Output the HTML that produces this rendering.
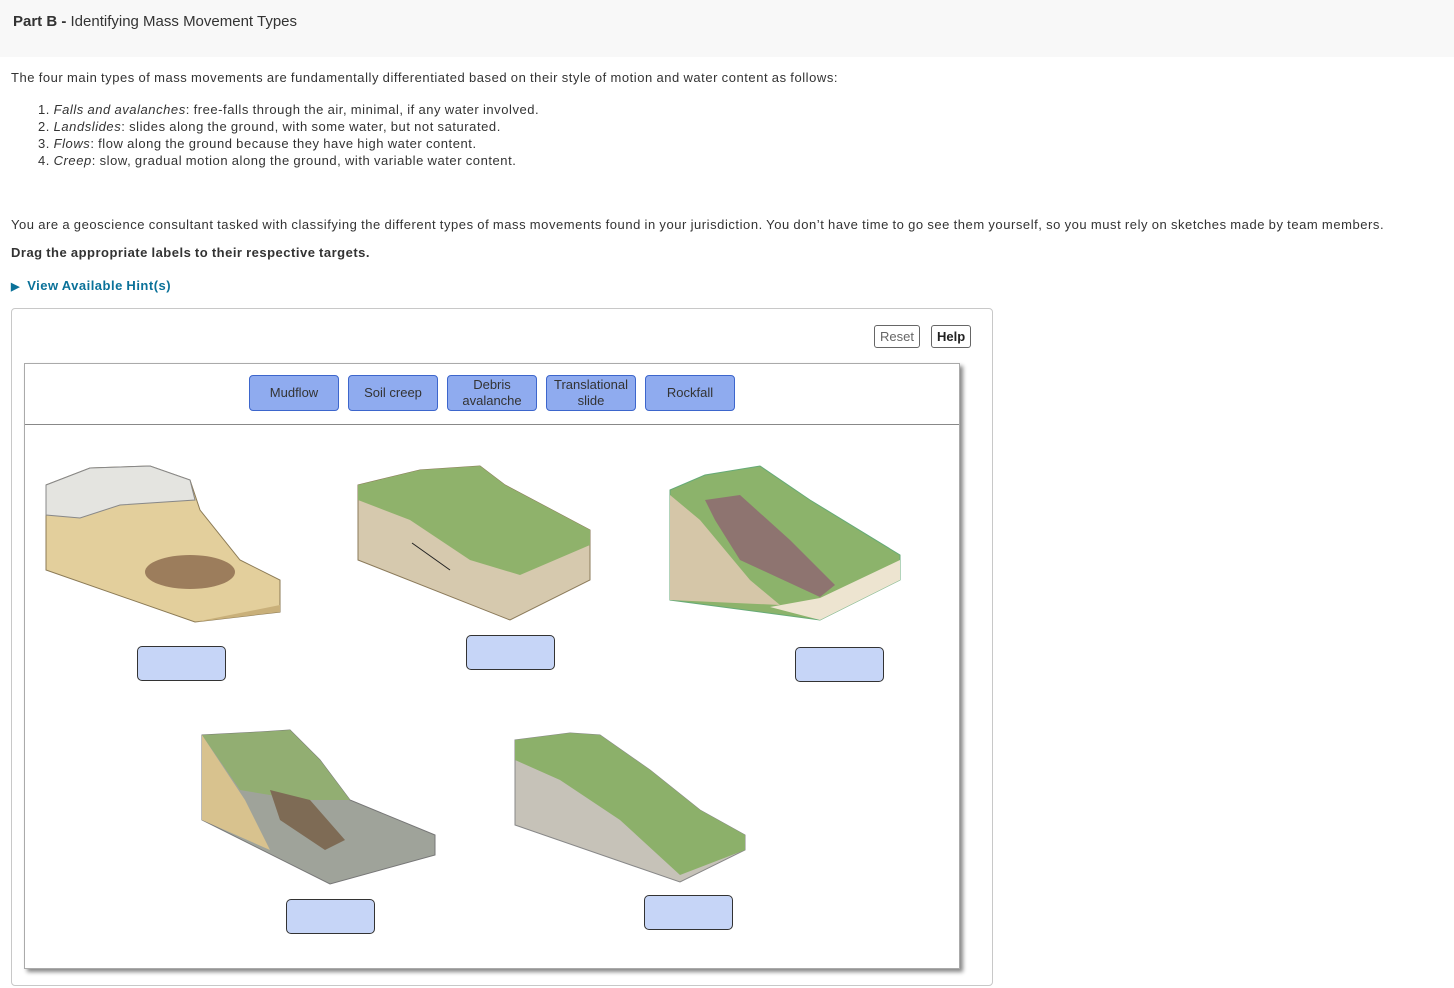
<!DOCTYPE html>
<html><head><meta charset="utf-8"><style>
*{box-sizing:border-box}
body{margin:0;width:1454px;height:988px;background:#fff;font-family:"Liberation Sans",Arial,sans-serif;color:#333;font-size:13px;position:relative;overflow:hidden}
.hdr{position:absolute;left:0;top:0;width:1454px;height:57px;background:#f8f8f8}
.hdr span{position:absolute;left:13px;top:13px;font-size:15px;color:#333}
.a{position:absolute;white-space:nowrap;font-size:13px;letter-spacing:0.55px;word-spacing:-0.5px}
.box{position:absolute;left:11px;top:308px;width:982px;height:678px;border:1px solid #c8c8c8;border-radius:4px}
.btn{position:absolute;top:325px;height:23px;border:1px solid #666;border-radius:3px;font-size:13px;line-height:21px;padding:0 5px;background:#fff}
.panel{position:absolute;left:24px;top:363px;width:936px;height:606px;border:1px solid #aaa;box-shadow:3px 3px 4px #888;background:#fff}
.div{position:absolute;left:0;top:60px;width:100%;height:1px;background:#888}
.lab{position:absolute;top:11px;width:90px;height:36px;background:#8fabef;border:1px solid #3d66cc;border-radius:4px;color:#333;font-size:13px;display:flex;align-items:center;justify-content:center;text-align:center;line-height:16px}
.tg{position:absolute;width:89px;height:35px;background:#c6d5f7;border:1px solid #333;border-radius:5px}
</style></head><body>
<div class="hdr"><span><b>Part B - </b>Identifying Mass Movement Types</span></div>
<div class="a" style="left:11px;top:70px">The four main types of mass movements are fundamentally differentiated based on their style of motion and water content as follows:</div>
<div class="a" style="left:38px;top:101px;line-height:17px">1. <i>Falls and avalanches</i>: free-falls through the air, minimal, if any water involved.<br>2. <i>Landslides</i>: slides along the ground, with some water, but not saturated.<br>3. <i>Flows</i>: flow along the ground because they have high water content.<br>4. <i>Creep</i>: slow, gradual motion along the ground, with variable water content.</div>
<div class="a" style="left:11px;top:217px">You are a geoscience consultant tasked with classifying the different types of mass movements found in your jurisdiction. You don’t have time to go see them yourself, so you must rely on sketches made by team members.</div>
<div class="a" style="left:11px;top:245px;font-weight:bold;letter-spacing:0.5px">Drag the appropriate labels to their respective targets.</div>
<div class="a" style="left:11px;top:278px;font-weight:bold;color:#0a7199;letter-spacing:0.5px"><span style="font-size:11px">&#9654;</span>&nbsp; View Available Hint(s)</div>
<div class="box"></div>
<div class="btn" style="left:874px;color:#666">Reset</div>
<div class="btn" style="left:931px;font-weight:bold;color:#222">Help</div>
<div class="panel">
<div class="div"></div>
<div class="lab" style="left:224px">Mudflow</div>
<div class="lab" style="left:323px">Soil creep</div>
<div class="lab" style="left:422px">Debris<br>avalanche</div>
<div class="lab" style="left:521px">Translational<br>slide</div>
<div class="lab" style="left:620px">Rockfall</div>
</div>
<svg style="position:absolute;left:0;top:0" width="1454" height="988">
<polygon points="46,485 90,468 150,466 190,480 200,510 240,560 280,580 280,612 195,622 46,570" fill="#e3cf9c" stroke="#8b7a55"/>
<polygon points="46,485 90,468 150,466 190,480 195,500 120,505 80,518 46,515" fill="#e4e4e0" stroke="#888"/>
<ellipse cx="190" cy="572" rx="45" ry="17" fill="#9c7d5c"/>
<polygon points="195,622 280,605 280,612" fill="#c9b07a"/>
<polygon points="358,485 420,470 480,466 505,485 590,530 590,580 510,620 358,560" fill="#d6c9ae" stroke="#8b7a5a"/>
<polygon points="358,485 420,470 480,466 505,485 590,530 590,545 520,575 470,560 410,520 358,500" fill="#8fb26b"/>
<line x1="412" y1="543" x2="450" y2="570" stroke="#222"/>
<polygon points="670,490 705,475 760,466 810,500 900,555 900,580 820,620 670,600" fill="#8cb36b" stroke="#6a7"/>
<polygon points="670,495 700,520 750,580 780,605 670,600" fill="#d5c6a8"/>
<polygon points="705,500 740,495 790,540 835,585 820,597 740,560 715,520" fill="#8e7470"/>
<polygon points="770,607 820,598 900,560 900,580 820,620" fill="#ede4d0"/>
<polygon points="202,735 260,732 290,730 320,760 350,800 435,835 435,855 330,884 202,820" fill="#9fa39a" stroke="#777"/>
<polygon points="202,735 260,732 290,730 320,760 350,800 300,800 240,790" fill="#92ae72"/>
<polygon points="202,735 245,800 270,850 202,820" fill="#d8c28e"/>
<polygon points="270,790 310,800 345,840 325,850 280,820" fill="#7e6b55"/>
<polygon points="515,740 570,733 600,735 650,770 700,810 745,835 745,850 680,882 515,825" fill="#c6c2b8" stroke="#888"/>
<polygon points="515,740 570,733 600,735 650,770 700,810 745,835 745,850 680,875 620,820 560,780 515,760" fill="#8cb06a"/>
</svg>
<div class="tg" style="left:137px;top:646px"></div>
<div class="tg" style="left:466px;top:635px"></div>
<div class="tg" style="left:795px;top:647px"></div>
<div class="tg" style="left:286px;top:899px"></div>
<div class="tg" style="left:644px;top:895px"></div>
</body></html>
